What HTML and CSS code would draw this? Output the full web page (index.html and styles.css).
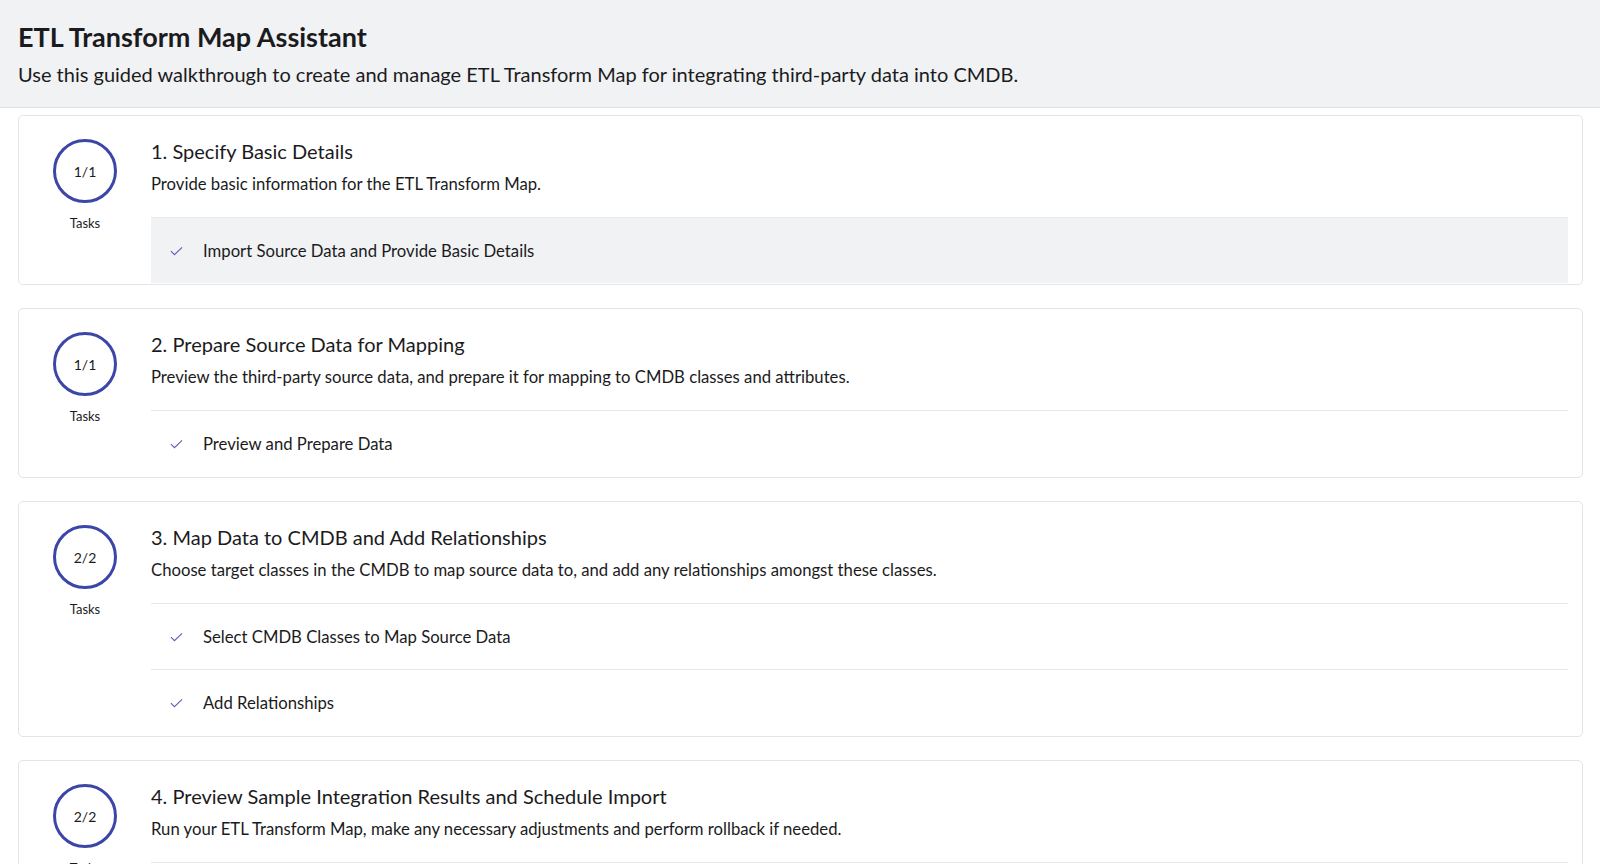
FILE: index.html
```html
<!DOCTYPE html>
<html lang="en">
<head>
    <meta charset="UTF-8">
    <meta name="viewport" content="width=device-width, initial-scale=1.0">
    <title>ETL Transform Map Assistant</title>
    <link rel="stylesheet" href="styles.css">
</head>
<body>
    <header class="page-header">
        <h1>ETL Transform Map Assistant</h1>
        <p>Use this guided walkthrough to create and manage ETL Transform Map for integrating third-party data into CMDB.</p>
    </header>

    <div class="steps">
        <!-- Etapa 1 -->
        <section class="step">
            <div class="progress">
                <div class="ring">1/1</div>
                <span class="ring-label">Tasks</span>
            </div>
            <div class="step-body">
                <h2>1. Specify Basic Details</h2>
                <p>Provide basic information for the ETL Transform Map.</p>
                <ul class="tasks">
                    <li class="task active">
                        <svg class="check" viewBox="0 0 14 10"><path d="M1 5.2 L4.8 9 L13 1"/></svg>
                        Import Source Data and Provide Basic Details
                    </li>
                </ul>
            </div>
        </section>

        <!-- Etapa 2 -->
        <section class="step">
            <div class="progress">
                <div class="ring">1/1</div>
                <span class="ring-label">Tasks</span>
            </div>
            <div class="step-body">
                <h2>2. Prepare Source Data for Mapping</h2>
                <p>Preview the third-party source data, and prepare it for mapping to CMDB classes and attributes.</p>
                <ul class="tasks">
                    <li class="task">
                        <svg class="check" viewBox="0 0 14 10"><path d="M1 5.2 L4.8 9 L13 1"/></svg>
                        Preview and Prepare Data
                    </li>
                </ul>
            </div>
        </section>

        <!-- Etapa 3 -->
        <section class="step">
            <div class="progress">
                <div class="ring">2/2</div>
                <span class="ring-label">Tasks</span>
            </div>
            <div class="step-body">
                <h2>3. Map Data to CMDB and Add Relationships</h2>
                <p>Choose target classes in the CMDB to map source data to, and add any relationships amongst these classes.</p>
                <ul class="tasks">
                    <li class="task">
                        <svg class="check" viewBox="0 0 14 10"><path d="M1 5.2 L4.8 9 L13 1"/></svg>
                        Select CMDB Classes to Map Source Data
                    </li>
                    <li class="task">
                        <svg class="check" viewBox="0 0 14 10"><path d="M1 5.2 L4.8 9 L13 1"/></svg>
                        Add Relationships
                    </li>
                </ul>
            </div>
        </section>

        <!-- Etapa 4 -->
        <section class="step">
            <div class="progress">
                <div class="ring">2/2</div>
                <span class="ring-label">Tasks</span>
            </div>
            <div class="step-body">
                <h2>4. Preview Sample Integration Results and Schedule Import</h2>
                <p>Run your ETL Transform Map, make any necessary adjustments and perform rollback if needed.</p>
                <ul class="tasks">
                    <li class="task">
                        <svg class="check" viewBox="0 0 14 10"><path d="M1 5.2 L4.8 9 L13 1"/></svg>
                        Test and Rollback Integration Results
                    </li>
                    <li class="task">
                        <svg class="check" viewBox="0 0 14 10"><path d="M1 5.2 L4.8 9 L13 1"/></svg>
                        Schedule Import
                    </li>
                </ul>
            </div>
        </section>
    </div>
</body>
</html>
```

FILE: styles.css
```css
body {
    margin: 0;
    font-family: Lato, "Open Sans", sans-serif;
    color: #1b1b1d;
    background-color: #fff;
}

.page-header {
    background-color: #f1f2f4;
    border-bottom: 1px solid #dedfe2;
    height: 108px;
    box-sizing: border-box;
    padding: 20px 18px 0 18px;
}

.page-header h1 {
    margin: 0;
    font-size: 27px;
    line-height: 34px;
    font-weight: 700;
}

.page-header p {
    margin: 8px 0 0 0;
    font-size: 20px;
    line-height: 24px;
}

.steps {
    padding: 7px 17px 0 18px;
}

.step {
    display: flex;
    border: 1px solid #e3e4e7;
    border-radius: 5px;
    padding: 0 14px 1px 0;
    margin-bottom: 23px;
}

.progress {
    width: 132px;
    flex-shrink: 0;
    display: flex;
    flex-direction: column;
    align-items: center;
    padding-top: 23px;
}

.ring {
    width: 64px;
    height: 64px;
    box-sizing: border-box;
    border: 3px solid #3c46a8;
    border-radius: 50%;
    display: flex;
    align-items: center;
    justify-content: center;
    font-size: 14px;
}

.ring-label {
    margin-top: 12px;
    font-size: 13px;
    line-height: 16px;
}

.step-body {
    flex: 1;
    padding-top: 23px;
}

.step-body h2 {
    margin: 0;
    font-size: 20px;
    line-height: 24px;
    font-weight: 400;
}

.step-body p {
    margin: 9px 0 0 0;
    font-size: 16.7px;
    line-height: 24px;
}

.tasks {
    list-style: none;
    margin: 21px 0 0 0;
    padding: 0;
}

.task {
    display: flex;
    align-items: center;
    gap: 20px;
    height: 66px;
    box-sizing: border-box;
    border-top: 1px solid #e6e7e9;
    padding-left: 19px;
    font-size: 16.7px;
}

.task.active {
    background-color: #f1f2f4;
    border-top-color: #e8e9ec;
}

.check {
    width: 13px;
    height: 10px;
    fill: none;
    stroke: #5c61b8;
    stroke-width: 1.2;
}
```
